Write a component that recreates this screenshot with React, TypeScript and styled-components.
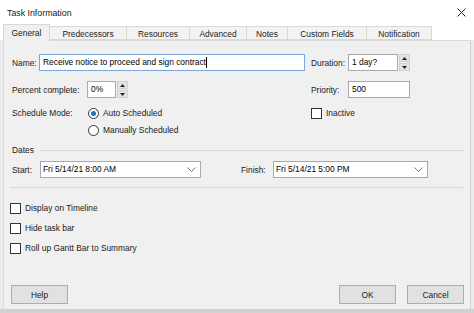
import React from "react";
import styled, { createGlobalStyle } from "styled-components";

const Global = createGlobalStyle`
  html, body { margin: 0; padding: 0; background: #ffffff; }
  body {
    font-family: "Liberation Sans", Arial, sans-serif;
    font-size: 8.4px;
    color: #000;
  }
  * { box-sizing: border-box; }
`;

const Window = styled.div`
  width: 474px;
  height: 313px;
  display: flex;
  flex-direction: column;
  background: #ffffff;
  overflow: hidden;
`;

const TitleBar = styled.div`
  height: 24px;
  flex: none;
  display: flex;
  align-items: center;
  justify-content: space-between;
  padding: 1px 8px 0 7px;
  font-size: 8.8px;
  color: #1a1a1a;
`;

const CloseIcon = styled.svg`
  width: 9px;
  height: 9px;
  display: block;
`;

const TabStrip = styled.div`
  height: 16px;
  flex: none;
  display: flex;
  align-items: flex-end;
  padding-left: 3px;
  position: relative;
  z-index: 1;
`;

const Tab = styled.div<{ $w: number; $active?: boolean }>`
  width: ${(p) => p.$w}px;
  height: ${(p) => (p.$active ? 17 : 14)}px;
  margin-left: -1px;
  margin-bottom: ${(p) => (p.$active ? -1 : 0)}px;
  display: flex;
  align-items: center;
  justify-content: center;
  padding-top: ${(p) => (p.$active ? 0 : 1)}px;
  border: 1px solid #d9d9d9;
  border-bottom: ${(p) => (p.$active ? "none" : "1px solid #d9d9d9")};
  background: ${(p) => (p.$active ? "#f0f0f0" : "#f3f3f3")};
  color: #1a1a1a;
  &:first-child { margin-left: 0; }
`;

const Body = styled.div`
  flex: 1;
  display: flex;
  flex-direction: column;
  background: #ececec;
  padding: 0 3px 0 3px;
  border-bottom: 4px solid #d2d2d2;
`;

const Panel = styled.div`
  flex: 1;
  display: flex;
  flex-direction: column;
  background: #f0f0f0;
  border: 1px solid #d9d9d9;
  border-bottom: none;
  border-right: 1px solid #cfcfcf;
  padding: 13px 6px 5px 6px;
`;

const Fields = styled.div`
  display: flex;
  flex-direction: column;
  padding-left: 2px;
`;

const Row = styled.div<{ $h: number; $mt?: number }>`
  height: ${(p) => p.$h}px;
  margin-top: ${(p) => p.$mt ?? 0}px;
  display: flex;
  align-items: center;
`;

const LeftCell = styled.div<{ $w: number }>`
  width: ${(p) => p.$w}px;
  flex: none;
  display: flex;
  align-items: center;
  height: 100%;
`;

const RightCell = styled.div`
  display: flex;
  align-items: center;
  height: 100%;
`;

const Label = styled.span<{ $w: number }>`
  width: ${(p) => p.$w}px;
  flex: none;
  color: #1a1a1a;
  white-space: nowrap;
`;

const TextBox = styled.div<{ $w: number; $h?: number; $focus?: boolean }>`
  width: ${(p) => p.$w}px;
  height: ${(p) => p.$h ?? 17}px;
  background: #ffffff;
  border: 1px solid ${(p) => (p.$focus ? "#7aa7d9" : "#a9a9a9")};
  display: flex;
  align-items: center;
  padding: 0 2px 1px 3px;
  white-space: nowrap;
  overflow: hidden;
`;

const Caret = styled.span`
  display: inline-block;
  width: 1px;
  height: 11px;
  background: #000;
`;

const Spin = styled.div`
  display: flex;
  align-items: stretch;
`;

const SpinButtons = styled.div`
  width: 11px;
  margin-left: 1px;
  display: flex;
  flex-direction: column;
  gap: 1px;
`;

const SpinButton = styled.div`
  flex: 1;
  background: #e3e3e3;
  border: 1px solid #d0d0d0;
  display: flex;
  align-items: center;
  justify-content: center;
`;

const Arrow = styled.svg`
  width: 5px;
  height: 3px;
  display: block;
`;

const Choice = styled.div`
  display: flex;
  align-items: center;
  gap: 4px;
  color: #1a1a1a;
  white-space: nowrap;
`;

const RadioDot = styled.span<{ $on?: boolean }>`
  width: 11px;
  height: 11px;
  border-radius: 50%;
  border: 1px solid #333;
  background: #fff;
  display: flex;
  align-items: center;
  justify-content: center;
  flex: none;
  &::after {
    content: "";
    width: 5px;
    height: 5px;
    border-radius: 50%;
    background: ${(p) => (p.$on ? "#1f6fc4" : "transparent")};
  }
`;

const CheckBox = styled.span`
  width: 11px;
  height: 11px;
  border: 1px solid #333;
  background: #fff;
  flex: none;
`;

const GroupHead = styled.div`
  height: 12px;
  margin-top: 7px;
  display: flex;
  align-items: center;
  padding-left: 2px;
  padding-right: 1px;
`;

const GroupTitle = styled.span`
  width: 28px;
  flex: none;
  color: #1a1a1a;
`;

const Rule = styled.div`
  flex: 1;
  height: 1px;
  background: #d7d7d7;
  margin-top: 1px;
`;

const Separator = styled.div`
  height: 1px;
  background: #d7d7d7;
  margin: 9px 1px 0 0;
`;

const Combo = styled.div<{ $w: number }>`
  width: ${(p) => p.$w}px;
  height: 17px;
  background: #fff;
  border: 1px solid #a9a9a9;
  display: flex;
  align-items: center;
  justify-content: space-between;
  padding: 0 4px 1px 2px;
  white-space: nowrap;
`;

const Chevron = styled.svg`
  width: 9px;
  height: 5px;
  display: block;
`;

const Checks = styled.div`
  display: flex;
  flex-direction: column;
  gap: 6px;
  margin-top: 13px;
`;

const CheckRow = styled.div`
  height: 14px;
  display: flex;
  align-items: center;
`;

const Buttons = styled.div`
  margin-top: auto;
  display: flex;
  align-items: center;
  padding-left: 1px;
  gap: 11px;
`;

const Button = styled.div`
  width: 57px;
  height: 19px;
  background: #e1e1e1;
  border: 1px solid #adadad;
  display: flex;
  align-items: center;
  justify-content: center;
  color: #1a1a1a;
  &:first-child { margin-right: auto; }
`;

const tabs: { label: string; w: number; active?: boolean }[] = [
  { label: "General", w: 47, active: true },
  { label: "Predecessors", w: 78 },
  { label: "Resources", w: 64 },
  { label: "Advanced", w: 58 },
  { label: "Notes", w: 42 },
  { label: "Custom Fields", w: 80 },
  { label: "Notification", w: 66 },
];

function SpinBox({ w, text }: { w: number; text: string }) {
  return (
    <Spin>
      <TextBox $w={w}>{text}</TextBox>
      <SpinButtons>
        <SpinButton>
          <Arrow viewBox="0 0 5 3">
            <polygon points="2.5,0 5,3 0,3" fill="#222" />
          </Arrow>
        </SpinButton>
        <SpinButton>
          <Arrow viewBox="0 0 5 3">
            <polygon points="0,0 5,0 2.5,3" fill="#222" />
          </Arrow>
        </SpinButton>
      </SpinButtons>
    </Spin>
  );
}

function DateCombo({ w, text }: { w: number; text: string }) {
  return (
    <Combo $w={w}>
      <span>{text}</span>
      <Chevron viewBox="0 0 9 5">
        <polyline points="0.5,0.5 4.5,4.5 8.5,0.5" fill="none" stroke="#777" strokeWidth="1" />
      </Chevron>
    </Combo>
  );
}

export default function App() {
  return (
    <Window>
      <Global />
      <TitleBar>
        <span>Task Information</span>
        <CloseIcon viewBox="0 0 9 9">
          <path d="M0.5 0.5 L8.5 8.5 M8.5 0.5 L0.5 8.5" stroke="#222" strokeWidth="1" />
        </CloseIcon>
      </TitleBar>
      <TabStrip>
        {tabs.map((t) => (
          <Tab key={t.label} $w={t.w} $active={t.active}>
            {t.label}
          </Tab>
        ))}
      </TabStrip>
      <Body>
        <Panel>
          <Fields>
            <Row $h={17}>
              <LeftCell $w={299}>
                <Label $w={27}>Name:</Label>
                <TextBox $w={266} $focus>
                  Receive notice to proceed and sign contract
                  <Caret />
                </TextBox>
              </LeftCell>
              <RightCell>
                <Label $w={37}>Duration:</Label>
                <SpinBox w={50} text="1 day?" />
              </RightCell>
            </Row>
            <Row $h={17} $mt={10}>
              <LeftCell $w={299}>
                <Label $w={75}>Percent complete:</Label>
                <SpinBox w={29} text="0%" />
              </LeftCell>
              <RightCell>
                <Label $w={37}>Priority:</Label>
                <TextBox $w={62}>500</TextBox>
              </RightCell>
            </Row>
            <Row $h={14} $mt={8}>
              <LeftCell $w={299}>
                <Label $w={76}>Schedule Mode:</Label>
                <Choice>
                  <RadioDot $on />
                  Auto Scheduled
                </Choice>
              </LeftCell>
              <RightCell>
                <Choice>
                  <CheckBox />
                  Inactive
                </Choice>
              </RightCell>
            </Row>
            <Row $h={14} $mt={3}>
              <LeftCell $w={299}>
                <Label $w={76} />
                <Choice>
                  <RadioDot />
                  Manually Scheduled
                </Choice>
              </LeftCell>
            </Row>
          </Fields>
          <GroupHead>
            <GroupTitle>Dates</GroupTitle>
            <Rule />
          </GroupHead>
          <Fields>
            <Row $h={17} $mt={5}>
              <LeftCell $w={229}>
                <Label $w={28}>Start:</Label>
                <DateCombo w={161} text="Fri 5/14/21 8:00 AM" />
              </LeftCell>
              <RightCell>
                <Label $w={32}>Finish:</Label>
                <DateCombo w={155} text="Fri 5/14/21 5:00 PM" />
              </RightCell>
            </Row>
          </Fields>
          <Separator />
          <Checks>
            <CheckRow>
              <Choice>
                <CheckBox />
                Display on Timeline
              </Choice>
            </CheckRow>
            <CheckRow>
              <Choice>
                <CheckBox />
                Hide task bar
              </Choice>
            </CheckRow>
            <CheckRow>
              <Choice>
                <CheckBox />
                Roll up Gantt Bar to Summary
              </Choice>
            </CheckRow>
          </Checks>
          <Buttons>
            <Button>Help</Button>
            <Button>OK</Button>
            <Button>Cancel</Button>
          </Buttons>
        </Panel>
      </Body>
    </Window>
  );
}
